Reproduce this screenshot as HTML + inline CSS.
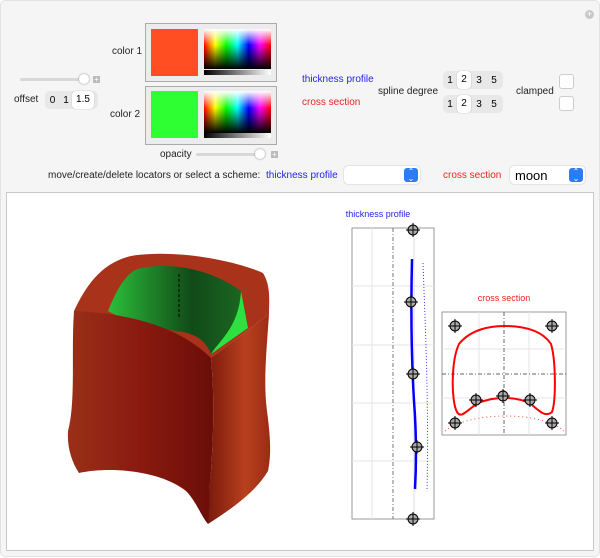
<!DOCTYPE html>
<html><head><meta charset="utf-8"><style>
body{margin:0;width:600px;height:557px;background:#fff;font-family:"Liberation Sans",sans-serif;overflow:hidden}
.p{position:absolute;left:0;top:0;width:598px;height:555px;background:#f5f5f5;border:1px solid #e2e2e2;border-radius:5px}
.a{position:absolute;font-size:10px;color:#222;white-space:nowrap}
.blue{color:#2222ee}.red{color:#ee2222}
.sw{position:absolute;border:1px solid #aaa;background:#ececec}
.seg{position:absolute;height:18px;background:#e8e8e8;border-radius:5px;font-size:10px;display:flex;align-items:center}
.seg span{display:inline-block;text-align:center}
.sel{background:#fff;border-radius:4px;box-shadow:0 0 1px #999;height:18px;line-height:18px}
.grad{position:absolute;background:linear-gradient(to bottom,rgba(255,255,255,0),rgba(0,0,0,0) 40%,#000),linear-gradient(to right,#f00,#ff0,#0f0,#0ff,#00f,#f0f,#f00)}
.grad:before{content:"";position:absolute;left:0;right:0;top:0;height:40%;background:linear-gradient(#fff,rgba(255,255,255,0))}
.gbar{position:absolute;background:linear-gradient(to right,#000,#fff)}
.slider{position:absolute;height:3px;background:#d8d8d8;border-radius:2px}
.knob{position:absolute;width:10px;height:10px;border-radius:50%;background:#fff;box-shadow:0 0 2px #888}
.plus{position:absolute;width:7px;height:7px;background:#bbb;color:#fff;font-size:8px;line-height:7px;text-align:center}
.cb{position:absolute;width:13px;height:13px;background:#fff;border:1px solid #ccc;border-radius:3px}
.dd{position:absolute;height:18px;background:#fff;border-radius:4px;box-shadow:0 0 1px #888}
.dd i{position:absolute;right:2px;top:2px;width:14px;height:14px;background:#2b7cf6;border-radius:3px;color:#fff;font-size:8px;line-height:7px;text-align:center;font-style:normal}
</style></head><body><div class="p">
<div style="position:absolute;left:584px;top:9px;width:9px;height:9px;border-radius:50%;background:#c8c8c8;color:#fff;font-size:9px;line-height:9px;text-align:center">+</div>
<div class="a" style="left:111px;top:45px">color 1</div>
<div class="a" style="left:109px;top:108px">color 2</div>
<div class="sw" style="left:144px;top:22px;width:130px;height:57px"></div>
<div style="position:absolute;left:150px;top:28px;width:47px;height:47px;background:#ff4f22"></div>
<div class="grad" style="left:203px;top:28px;width:67px;height:40px"></div>
<div class="gbar" style="left:203px;top:69px;width:67px;height:5px"></div>
<div class="sw" style="left:144px;top:85px;width:130px;height:57px"></div>
<div style="position:absolute;left:150px;top:90px;width:47px;height:47px;background:#2dff33"></div>
<div class="grad" style="left:203px;top:90px;width:67px;height:42px"></div>
<div class="gbar" style="left:203px;top:132px;width:67px;height:5px"></div>
<div class="slider" style="left:19px;top:77px;width:68px"></div><div class="knob" style="left:78px;top:73px"></div><div class="plus" style="left:92px;top:75px">+</div>
<div class="a" style="left:13px;top:93px">offset</div>
<div class="seg" style="left:44px;top:90px;width:53px"><span style="width:15px">0</span><span style="width:12px">1</span><span class="sel" style="width:22px">1.5</span></div>
<div class="a" style="left:159px;top:148px">opacity</div>
<div class="slider" style="left:195px;top:152px;width:68px"></div><div class="knob" style="left:254px;top:148px"></div><div class="plus" style="left:270px;top:150px">+</div>
<div class="a" style="left:47px;top:169px">move/create/delete locators or select a scheme:</div>
<div class="a blue" style="left:265px;top:169px">thickness profile</div>
<div class="dd" style="left:343px;top:165px;width:76px"><i>⌃<br>⌄</i></div>
<div class="a red" style="left:442px;top:169px">cross section</div>
<div class="dd" style="left:509px;top:165px;width:75px"><span style="position:absolute;left:5px;top:2px;font-size:13px">moon</span><i>⌃<br>⌄</i></div>
<div class="a blue" style="left:301px;top:73px">thickness profile</div>
<div class="a red" style="left:301px;top:96px">cross section</div>
<div class="a" style="left:377px;top:85px">spline degree</div>
<div class="seg" style="left:442px;top:70px;width:60px"><span style="width:14px">1</span><span class="sel" style="width:14px">2</span><span style="width:16px">3</span><span style="width:14px">5</span></div>
<div class="seg" style="left:442px;top:94px;width:60px"><span style="width:14px">1</span><span class="sel" style="width:14px">2</span><span style="width:16px">3</span><span style="width:14px">5</span></div>
<div class="a" style="left:515px;top:85px">clamped</div>
<div class="cb" style="left:558px;top:73px"></div><div class="cb" style="left:558px;top:95px"></div>
<div style="position:absolute;left:5px;top:191px;width:586px;height:357px;background:#fff;border:1px solid #c8c8c8"></div>
<svg style="position:absolute;left:0;top:0" width="600" height="557">
<defs>
<linearGradient id="fr" x1="0" x2="1"><stop offset="0" stop-color="#9a3018"/><stop offset=".5" stop-color="#8a1a10"/><stop offset="1" stop-color="#6a0e08"/></linearGradient>
<linearGradient id="rs" x1="0" x2="1"><stop offset="0" stop-color="#7a1a0c"/><stop offset=".6" stop-color="#b8401e"/><stop offset="1" stop-color="#9a2c14"/></linearGradient>
<linearGradient id="gr" x1="0" x2="1"><stop offset="0" stop-color="#2bbf3a"/><stop offset=".6" stop-color="#114a18"/><stop offset="1" stop-color="#1c6a22"/></linearGradient>
</defs>
<path d="M73 310 C85 285 100 262 130 255 C170 248 230 258 262 272 C270 285 268 300 268 313 L210 357 Z" fill="#a8321a"/>
<path d="M107 310 C115 290 125 270 140 267 C165 262 205 265 240 290 L247 327 L210 353 C205 340 195 332 175 330 C150 326 120 318 107 310 Z" fill="url(#gr)"/>
<path d="M240 290 L247 327 L210 353 C220 338 238 325 240 290 Z" fill="#2ee040"/>
<line x1="178" y1="273" x2="178" y2="318" stroke="#000" stroke-width="1" stroke-dasharray="3,2"/>
<path d="M73 310 C110 312 170 318 210 357 C214 400 212 440 210 470 C207 495 210 515 207 523 C200 515 195 500 185 490 C160 470 110 465 78 472 C70 460 66 445 67 430 C75 400 70 350 73 310 Z" fill="url(#fr)"/>
<path d="M210 357 L268 313 C266 345 262 380 266 410 C270 440 270 455 267 470 C255 490 235 505 207 523 C210 505 207 490 210 470 C212 440 214 400 210 357 Z" fill="url(#rs)"/>
<text x="377" y="216" font-size="9" fill="#22e" text-anchor="middle" font-family="Liberation Sans">thickness profile</text>
<rect x="351" y="227" width="82" height="291" fill="#fff" stroke="#999"/>
<g stroke="#e4e4e4"><line x1="371" y1="227" x2="371" y2="518"/><line x1="351" y1="285" x2="433" y2="285"/><line x1="351" y1="344" x2="433" y2="344"/><line x1="351" y1="402" x2="433" y2="402"/><line x1="351" y1="460" x2="433" y2="460"/></g>
<line x1="392" y1="227" x2="392" y2="518" stroke="#777" stroke-dasharray="4,2,1,2"/>
<line x1="413" y1="227" x2="413" y2="518" stroke="#ddd"/>
<path d="M411 258 C410 300 410 350 413 400 C416 440 415 470 414 488" stroke="#00f" stroke-width="2.5" fill="none"/>
<path d="M422 262 C424 320 428 400 426 490" stroke="#33f" stroke-dasharray="1,2" fill="none"/>
<g fill="#aaa" stroke="#000" stroke-width="1"><circle cx="412" cy="229" r="5"/><circle cx="410" cy="301" r="5"/><circle cx="412" cy="373" r="5"/><circle cx="416" cy="446" r="5"/><circle cx="412" cy="518" r="5"/></g>
<g stroke="#000"><path d="M405 229h14M412 222v14M403 301h14M410 294v14M405 373h14M412 366v14M409 446h14M416 439v14M405 518h14M412 511v14"/></g>
<text x="503" y="300" font-size="9" fill="#e22" text-anchor="middle" font-family="Liberation Sans">cross section</text>
<rect x="441" y="311" width="124" height="123" fill="#fff" stroke="#999"/>
<g stroke="#e4e4e4"><line x1="478" y1="311" x2="478" y2="434"/><line x1="528" y1="311" x2="528" y2="434"/><line x1="441" y1="348" x2="565" y2="348"/><line x1="441" y1="397" x2="565" y2="397"/></g>
<line x1="503" y1="311" x2="503" y2="434" stroke="#666" stroke-dasharray="4,2,1,2"/><line x1="441" y1="373" x2="565" y2="373" stroke="#666" stroke-dasharray="4,2,1,2"/>
<path d="M456 411 C450 400 450 360 458 343 C470 328 490 325 503 325 C520 325 540 328 550 343 C555 360 555 400 551 411 C545 416 540 412 530 403 C515 395 495 395 477 402 C465 410 460 418 456 411 Z" stroke="#f00" stroke-width="2" fill="none"/>
<path d="M444 430 C470 410 540 410 563 430" stroke="#f44" stroke-dasharray="1,3" fill="none"/>
<g fill="#aaa" stroke="#000"><circle cx="454" cy="325" r="5"/><circle cx="551" cy="325" r="5"/><circle cx="475" cy="399" r="5"/><circle cx="502" cy="395" r="5"/><circle cx="529" cy="399" r="5"/><circle cx="454" cy="422" r="5"/><circle cx="551" cy="422" r="5"/></g>
<g stroke="#000"><path d="M447 325h14M454 318v14M544 325h14M551 318v14M468 399h14M475 392v14M495 395h14M502 388v14M522 399h14M529 392v14M447 422h14M454 415v14M544 422h14M551 415v14"/></g>
</svg>
</div></body></html>
